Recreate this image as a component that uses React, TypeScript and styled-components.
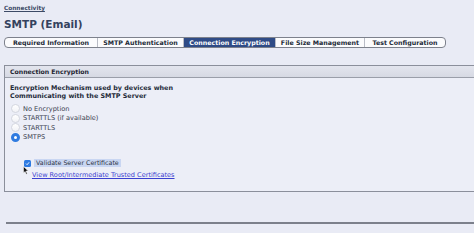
import React from "react";
import styled, { createGlobalStyle } from "styled-components";

const Global = createGlobalStyle`
  html, body { margin: 0; padding: 0; background: #e9ebf5; }
  body { font-family: "DejaVu Sans", Verdana, sans-serif; overflow: hidden; }
`;

const Page = styled.div`
  width: 474px;
  height: 233px;
  position: relative;
  overflow: hidden;
  padding: 4px 0 0 4px;
  box-sizing: border-box;
  display: flex;
  flex-direction: column;
`;

const Crumb = styled.a`
  font-size: 5.8px;
  font-weight: bold;
  color: #3c4a66;
  text-decoration: underline;
  line-height: 9px;
  align-self: flex-start;
`;

const Title = styled.h1`
  margin: 5px 0 0 0;
  font-size: 10.5px;
  font-weight: bold;
  color: #34425e;
  line-height: 13px;
`;

const TabBar = styled.div`
  margin-top: 6px;
  width: 442px;
  height: 11px;
  box-sizing: border-box;
  border: 1px solid #7d818c;
  border-radius: 4px;
  background: #fbfbfd;
  display: flex;
  overflow: hidden;
`;

const Tab = styled.div<{ $active?: boolean; $w: number }>`
  width: ${(p) => p.$w}px;
  flex: none;
  box-sizing: border-box;
  border-right: 1px solid #b9bcc6;
  background: ${(p) => (p.$active ? "#2f4b86" : "transparent")};
  color: ${(p) => (p.$active ? "#ffffff" : "#222a38")};
  font-size: 6.3px;
  font-weight: bold;
  display: flex;
  align-items: center;
  justify-content: center;
  line-height: 9px;
  &:last-child { border-right: none; }
`;

const Panel = styled.div`
  margin-top: 17px;
  width: 480px;
  height: 127px;
  box-sizing: border-box;
  border: 1px solid #8b8f9b;
  background: #eceef7;
  display: flex;
  flex-direction: column;
`;

const PanelHead = styled.div`
  height: 12px;
  box-sizing: border-box;
  background: linear-gradient(#e3e5ee, #d6d9e3);
  border-bottom: 1px solid #9a9ea9;
  font-size: 6.2px;
  font-weight: bold;
  color: #1e2533;
  padding-left: 5px;
  display: flex;
  align-items: center;
`;

const PanelBody = styled.div`
  padding: 6px 0 0 5px;
  display: flex;
  flex-direction: column;
`;

const Question = styled.div`
  font-size: 6.4px;
  font-weight: bold;
  color: #232a38;
  line-height: 8px;
`;

const RadioList = styled.div`
  margin-top: 4px;
  display: flex;
  flex-direction: column;
`;

const RadioRow = styled.label`
  display: flex;
  align-items: center;
  height: 9.5px;
  font-size: 6.6px;
  color: #3a4150;
`;

const RadioDot = styled.span<{ $on?: boolean }>`
  width: 9px;
  height: 9px;
  border-radius: 50%;
  box-sizing: border-box;
  margin: 0 3px 0 1px;
  background: ${(p) => (p.$on ? "#ffffff" : "linear-gradient(#ffffff, #f1f2f6)")};
  border: ${(p) => (p.$on ? "3px solid #2f7be0" : "0.5px solid #d4d7e0")};
`;

const CheckRow = styled.div`
  margin: 17px 0 0 14px;
  display: flex;
  align-items: center;
  height: 8px;
`;

const CheckBox = styled.span`
  width: 7px;
  height: 7px;
  border-radius: 1.5px;
  background: #2d7ae2;
  display: flex;
  align-items: center;
  justify-content: center;
  margin-right: 3px;
`;

const CheckLabel = styled.span`
  font-size: 6.3px;
  color: #2c3444;
  background: #c9d6f2;
  padding: 0 2px;
  line-height: 8px;
`;

const Link = styled.a`
  margin: 4px 0 0 22px;
  font-size: 6.55px;
  color: #3b3fd0;
  text-decoration: underline;
  line-height: 8px;
  align-self: flex-start;
`;

const Rule = styled.div`
  margin: 30px 0 0 2px;
  height: 2px;
  background: #7c808b;
  width: 480px;
`;

const Cursor = styled.svg`
  position: absolute;
  left: 23px;
  top: 166px;
`;

const tabs: [string, number][] = [
  ["Required Information", 93],
  ["SMTP Authentication", 86],
  ["Connection Encryption", 92],
  ["File Size Management", 89],
  ["Test Configuration", 80],
];

const radios = ["No Encryption", "STARTTLS (if available)", "STARTTLS", "SMTPS"];

export default function App() {
  return (
    <>
      <Global />
      <Page>
        <Crumb>Connectivity</Crumb>
        <Title>SMTP (Email)</Title>
        <TabBar>
          {tabs.map(([t, w]) => (
            <Tab key={t} $w={w} $active={t === "Connection Encryption"}>
              {t}
            </Tab>
          ))}
        </TabBar>
        <Panel>
          <PanelHead>Connection Encryption</PanelHead>
          <PanelBody>
            <Question>
              Encryption Mechanism used by devices when
              <br />
              Communicating with the SMTP Server
            </Question>
            <RadioList>
              {radios.map((r) => (
                <RadioRow key={r}>
                  <RadioDot $on={r === "SMTPS"} />
                  {r}
                </RadioRow>
              ))}
            </RadioList>
            <CheckRow>
              <CheckBox>
                <svg width="5" height="5" viewBox="0 0 10 10">
                  <path d="M2 5.2 L4.2 7.4 L8.2 2.6" fill="none" stroke="#fff" strokeWidth="1.8" />
                </svg>
              </CheckBox>
              <CheckLabel>Validate Server Certificate</CheckLabel>
            </CheckRow>
            <Link>View Root/Intermediate Trusted Certificates</Link>
          </PanelBody>
        </Panel>
        <Rule />
        <Cursor width="6" height="9" viewBox="0 0 12 18">
          <path d="M1 1 L1 14 L4 11 L6.5 16.5 L8.5 15.5 L6 10 L10.5 10 Z" fill="#111" stroke="#fff" strokeWidth="1" />
        </Cursor>
      </Page>
    </>
  );
}
